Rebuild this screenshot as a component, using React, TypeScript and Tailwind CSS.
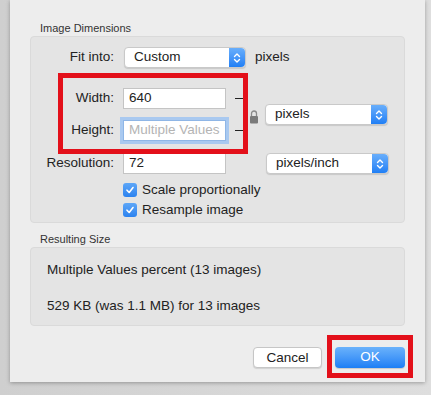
import { useState } from 'react'

const font = { fontFamily: '"Liberation Sans", Arial, sans-serif' }

function Stepper() {
  return (
    <div className="flex h-full w-[16px] items-center justify-center rounded-r-[4px] bg-gradient-to-b from-[#68aefb] to-[#1f7ff5]">
      <svg width="8" height="12" viewBox="0 0 8 12" fill="none" stroke="white" strokeWidth="1.4" strokeLinecap="round" strokeLinejoin="round">
        <path d="M1.5 4.5 L4 2 L6.5 4.5" />
        <path d="M1.5 7.5 L4 10 L6.5 7.5" />
      </svg>
    </div>
  )
}

function Select({ value, width }: { value: string; width: string }) {
  return (
    <div className={`flex h-[21px] ${width} items-stretch rounded-[4px] border border-[#c9c9c9] bg-white shadow-[0_1px_1px_rgba(0,0,0,0.12)]`}>
      <span className="flex-1 self-center pl-[9px] text-[13.5px] text-[#222]">{value}</span>
      <Stepper />
    </div>
  )
}

function Field({ value, placeholder, focused }: { value?: string; placeholder?: string; focused?: boolean }) {
  return (
    <div
      className={`flex h-[21px] w-[103px] items-center border bg-white pl-[5px] text-[13.5px] ${
        focused ? 'border-[#8fb6e6] shadow-[0_0_0_3px_#a9c9f0]' : 'border-[#c4c4c4]'
      }`}
    >
      {value ? <span className="text-[#222]">{value}</span> : <span className="text-[#b4b4b4]">{placeholder}</span>}
    </div>
  )
}

function Check({ label }: { label: string }) {
  const [on, setOn] = useState(true)
  return (
    <button className="flex h-[16px] items-center gap-[5px]" onClick={() => setOn(!on)}>
      <span
        className={`flex h-[14px] w-[14px] items-center justify-center rounded-[3px] ${
          on ? 'bg-gradient-to-b from-[#5da6f7] to-[#2b82ef]' : 'border border-[#aaa] bg-white'
        }`}
      >
        {on && (
          <svg width="10" height="10" viewBox="0 0 10 10" fill="none" stroke="white" strokeWidth="1.6" strokeLinecap="round" strokeLinejoin="round">
            <path d="M2 5.2 L4.2 7.5 L8 2.5" />
          </svg>
        )}
      </span>
      <span className="text-[13.5px] text-[#222]">{label}</span>
    </button>
  )
}

function Lock() {
  return (
    <svg width="10" height="15" viewBox="0 0 10 15">
      <path d="M2.5 7 V4.5 a2.5 2.5 0 0 1 5 0 V7" fill="none" stroke="#8a8a8a" strokeWidth="1.3" />
      <rect x="1" y="7" width="8" height="7.5" rx="1" fill="#7a7a7a" />
    </svg>
  )
}

export default function App() {
  return (
    <div className="relative h-[395px] w-[431px] overflow-hidden bg-gradient-to-r from-[#cfcfcf] to-[#dedede]" style={font}>
      <div className="ml-[10px] h-[382px] w-[415px] bg-[#ededed] px-[20px] pt-[21px] shadow-[0_1px_4px_rgba(0,0,0,0.3)]">
        <div className="ml-[10px] text-[11px] leading-[14px] text-[#333]">Image Dimensions</div>

        <div className="mt-[1px] h-[187px] w-[375px] rounded-[4px] border border-[#dadada] bg-[#e4e4e4] pt-[10px]">
          <div className="flex h-[21px] items-center">
            <span className="w-[83px] text-right text-[13.5px] text-[#222]">Fit into:</span>
            <div className="ml-[10px]">
              <Select value="Custom" width="w-[122px]" />
            </div>
            <span className="ml-[9px] text-[13.5px] text-[#222]">pixels</span>
          </div>

          <div className="mt-[20px] flex items-center">
            <div className="flex flex-col gap-[11px]">
              <div className="flex h-[21px] items-center">
                <span className="w-[83px] text-right text-[13.5px] text-[#222]">Width:</span>
                <div className="ml-[9px]">
                  <Field value="640" />
                </div>
                <div className="ml-[9px] h-px w-[9px] bg-[#222]" />
              </div>
              <div className="flex h-[21px] items-center">
                <span className="w-[83px] text-right text-[13.5px] text-[#222]">Height:</span>
                <div className="ml-[9px]">
                  <Field placeholder="Multiple Values" focused />
                </div>
                <div className="ml-[9px] h-px w-[9px] bg-[#222]" />
              </div>
            </div>
            <div className="ml-[5px] mt-[4px]">
              <Lock />
            </div>
            <div className="ml-[6px]">
              <Select value="pixels" width="w-[123px]" />
            </div>
          </div>

          <div className="mt-[12px] flex h-[21px] items-center">
            <span className="w-[83px] text-right text-[13.5px] text-[#222]">Resolution:</span>
            <div className="ml-[9px]">
              <Field value="72" />
            </div>
            <div className="ml-[40px]">
              <Select value="pixels/inch" width="w-[123px]" />
            </div>
          </div>

          <div className="ml-[92px] mt-[8px] flex flex-col items-start gap-[4px]">
            <Check label="Scale proportionally" />
            <Check label="Resample image" />
          </div>
        </div>

        <div className="ml-[10px] mt-[9px] text-[11px] leading-[14px] text-[#333]">Resulting Size</div>
        <div className="mt-[1px] flex h-[79px] w-[375px] flex-col justify-between rounded-[4px] border border-[#dadada] bg-[#e4e4e4] pb-[9px] pl-[16px] pt-[12px] text-[13.5px] text-[#222]">
          <span>Multiple Values percent (13 images)</span>
          <span>529 KB (was 1.1 MB) for 13 images</span>
        </div>

        <div className="mt-[21px] flex justify-end gap-[13px]">
          <button className="h-[21px] w-[69px] rounded-[4px] border border-[#c6c6c6] bg-white text-[13.5px] text-[#222] shadow-[0_1px_1px_rgba(0,0,0,0.12)]">
            Cancel
          </button>
          <button className="h-[21px] w-[70px] rounded-[4px] bg-gradient-to-b from-[#6ab2fb] to-[#1b7ff5] text-[13.5px] text-white shadow-[0_1px_1px_rgba(0,0,0,0.15)]">
            OK
          </button>
        </div>
      </div>

      <div className="pointer-events-none absolute left-[58px] top-[73px] h-[81px] w-[190px] border-[5px] border-[#e3101a]" />
      <div className="pointer-events-none absolute left-[327px] top-[335px] h-[43px] w-[86px] border-[5px] border-[#e3101a]" />
    </div>
  )
}
